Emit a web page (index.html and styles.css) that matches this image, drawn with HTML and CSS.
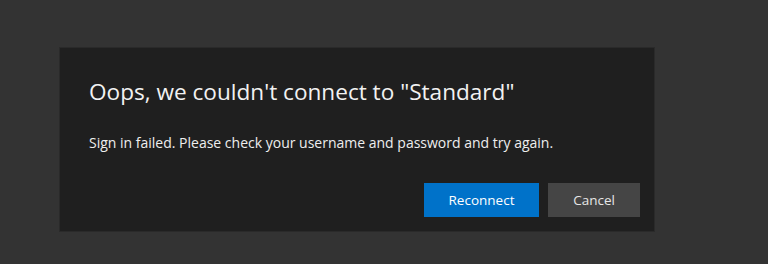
FILE: index.html
```html
<!DOCTYPE html>
<html lang="en">
<head>
    <meta charset="UTF-8">
    <title>Reconnect</title>
    <link rel="stylesheet" href="styles.css">
</head>
<body>
<div class="dialog">
    <h1 class="dialog-title">Oops, we couldn't connect to "Standard"</h1>
    <p class="dialog-text">Sign in failed. Please check your username and password and try again.</p>
    <div class="dialog-buttons">
        <button class="btn primary">Reconnect</button>
        <button class="btn secondary">Cancel</button>
    </div>
</div>
</body>
</html>
```

FILE: styles.css
```css
* {
    box-sizing: border-box;
    margin: 0;
    padding: 0;
}

body {
    font-family: 'Open Sans', sans-serif;
    background-color: #333333;
    color: #fff;
    padding: 47px 0 0 59px;
    height: 264px;
    overflow: hidden;
}

/* Dialog box */
.dialog {
    width: 596px;
    height: 185px;
    background-color: #1f1f1f;
    border: 1px solid #2a2a2a;
    padding: 27px 14px 0 29px;
}

.dialog-title {
    font-size: 22.6px;
    font-weight: 400;
    line-height: 34px;
    color: #f2f2f2;
}

.dialog-text {
    font-size: 14px;
    line-height: 20px;
    margin-top: 24px;
    color: #eee;
}

.dialog-buttons {
    display: flex;
    justify-content: flex-end;
    gap: 9px;
    margin-top: 30px;
}

.btn {
    font-family: 'Open Sans', sans-serif;
    font-size: 13.5px;
    height: 34px;
    border: none;
    color: #fff;
}

.btn.primary {
    width: 115px;
    background-color: #0072c9;
}

.btn.secondary {
    width: 92px;
    background-color: #454545;
    color: #e6e6e6;
}
```
